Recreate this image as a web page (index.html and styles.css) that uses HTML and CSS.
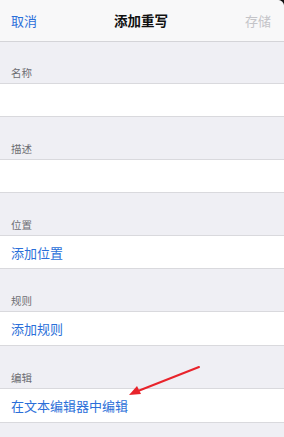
FILE: index.html
```html
<!DOCTYPE html>
<html lang="zh-CN">
<head>
<meta charset="utf-8">
<title>添加重写</title>
<link rel="stylesheet" href="styles.css">
</head>
<body>
<div class="screen">
  <header class="nav">
    <span class="nav-btn cancel">取消</span>
    <span class="nav-title">添加重写</span>
    <span class="nav-btn save">存储</span>
  </header>
  <section class="group first">
    <div class="group-label">名称</div>
    <div class="cell"></div>
  </section>
  <section class="group">
    <div class="group-label">描述</div>
    <div class="cell"></div>
  </section>
  <section class="group">
    <div class="group-label">位置</div>
    <div class="cell link">添加位置</div>
  </section>
  <section class="group">
    <div class="group-label">规则</div>
    <div class="cell link tall">添加规则</div>
  </section>
  <section class="group">
    <div class="group-label">编辑</div>
    <div class="cell link tall">在文本编辑器中编辑</div>
  </section>
  <svg class="arrow" width="284" height="437" viewBox="0 0 284 437">
    <line x1="199" y1="367" x2="138" y2="391" stroke="#e8232b" stroke-width="2" stroke-linecap="round"/>
    <polygon points="129,395 137,386 141,394" fill="#e8232b"/>
  </svg>
  <div class="corner"></div>
</div>
</body>
</html>
```
FILE: styles.css
```css
html, body {
  margin: 0;
  padding: 0;
}
body {
  background: #efeff4;
  font-family: "Noto Sans CJK SC", "Noto Sans", sans-serif;
}
.screen {
  position: relative;
  width: 284px;
  height: 437px;
  overflow: hidden;
  background: #efeff4;
}
.nav {
  height: 41px;
  background: #f8f8f9;
  border-bottom: 1px solid #d4d4d8;
  display: flex;
  align-items: center;
  justify-content: space-between;
  padding: 0 13px 0 11px;
  box-sizing: content-box;
}
.nav-btn {
  font-size: 13px;
  line-height: 1;
  width: 60px;
}
.cancel {
  color: #2b6fd9;
}
.save {
  color: #c4c4c8;
  text-align: right;
}
.nav-title {
  font-size: 13.5px;
  font-weight: 700;
  color: #111;
  line-height: 1;
}
.group-label {
  height: 43px;
  box-sizing: border-box;
  border-bottom: 1px solid #d9d9dd;
  display: flex;
  align-items: flex-end;
  padding: 0 0 5px 11px;
  font-size: 10.5px;
  line-height: 1;
  color: #6d6d72;
}
.group.first .group-label {
  height: 42px;
}
.cell {
  height: 33px;
  box-sizing: border-box;
  background: #fff;
  border-bottom: 1px solid #d9d9dd;
  display: flex;
  align-items: center;
  padding-left: 11px;
  font-size: 13px;
  line-height: 1;
}
.cell.tall {
  height: 34px;
}
.link {
  color: #2b6fd9;
}
.arrow {
  position: absolute;
  left: 0;
  top: 0;
  pointer-events: none;
}
.corner {
  position: absolute;
  right: 0;
  top: 0;
  width: 6px;
  height: 6px;
  background: radial-gradient(circle at 0 100%, transparent 5.5px, #111 6.5px);
}
```
